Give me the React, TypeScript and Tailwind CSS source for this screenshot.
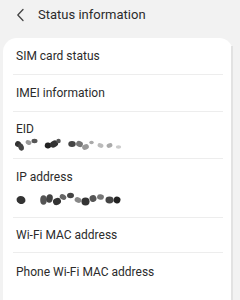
import React from "react";

const font = { fontFamily: "Roboto, 'Noto Sans', Arial, sans-serif" };

type Blot = [number, number, number, number, number, string];

function Blotches({ items, width, height, scale }: { items: Blot[]; width: number; height: number; scale: number }) {
  return (
    <svg width={width} height={height} viewBox={`0 0 ${width} ${height}`}>
      <g transform={`scale(${scale})`}>
        {items.map(([cx, cy, rx, ry, rot, fill], i) => (
          <ellipse key={i} cx={cx} cy={cy} rx={rx} ry={ry} fill={fill} transform={`rotate(${rot} ${cx} ${cy})`} />
        ))}
      </g>
    </svg>
  );
}

const eidBlots: Blot[] = [
  [2, 4, 2, 2, 20, "#333"],
  [4, 6, 1.8, 2.5, -20, "#444"],
  [9, 3, 2, 1.5, 30, "#999"],
  [13, 2, 2, 1.5, 0, "#555"],
  [22, 5, 2.2, 2, 10, "#222"],
  [26, 4, 2.8, 2.2, -30, "#333"],
  [29, 2, 1.5, 1.5, 0, "#555"],
  [38, 4, 2.5, 2, 0, "#444"],
  [43, 4, 2.3, 2, 20, "#777"],
  [47, 6, 2.3, 1.8, -20, "#999"],
  [51, 3, 1.5, 1.2, 0, "#aaa"],
  [57, 5, 2, 1.5, 20, "#bbb"],
  [63, 5, 2, 1.5, -20, "#aaa"],
  [69, 6, 1.8, 1.2, 0, "#ccc"],
];

const ipBlots: Blot[] = [
  [4, 6, 3, 2.7, 20, "#333"],
  [19, 6, 2.2, 3.2, 0, "#555"],
  [23, 5, 2.2, 2.8, 10, "#444"],
  [28, 7, 2.7, 2.3, -20, "#333"],
  [32, 4, 2.3, 1.8, 30, "#666"],
  [37, 3, 2.3, 1.8, 0, "#444"],
  [42, 6, 2.3, 1.8, 20, "#888"],
  [47, 7, 2.7, 2.7, 0, "#333"],
  [52, 5, 2.3, 2.3, -20, "#555"],
  [57, 4, 2.3, 1.8, 10, "#777"],
  [63, 6, 2.7, 2.3, 0, "#444"],
  [68, 6, 2.3, 2.3, 20, "#222"],
];

function Row({ label, h, sep = true }: { label: string; h: string; sep?: boolean }) {
  return (
    <div className={`mx-[10px] flex items-center pl-[3px] ${h} ${sep ? "border-b border-[#ededed]" : ""}`}>
      <span className="text-[12px] text-[#2b2b2b]">{label}</span>
    </div>
  );
}

export default function App() {
  return (
    <div className="relative h-[300px] w-[240px] overflow-hidden bg-[#f2f2f2]" style={font}>
      <div className="flex h-[29px] items-center pl-[16px]">
        <svg width="9" height="14" viewBox="0 0 9 14" className="text-[#444]">
          <path d="M7 1.5 L1.8 7 L7 12.5" fill="none" stroke="currentColor" strokeWidth="1.3" strokeLinecap="round" strokeLinejoin="round" />
        </svg>
        <span className="ml-[13px] text-[13px] text-[#2b2b2b]">Status information</span>
      </div>
      <div className="ml-[3px] mr-[7px] mt-[9px] h-[280px] rounded-[14px] bg-white">
        <Row label="SIM card status" h="h-[37px]" />
        <Row label="IMEI information" h="h-[37px]" />
        <div className="mx-[10px] flex h-[47px] flex-col border-b border-[#ededed] pl-[2px] pt-[9px]">
          <span className="pl-[1px] text-[12px] leading-[16px] text-[#2b2b2b]">EID</span>
          <div className="mt-[1px]">
            <Blotches items={eidBlots} width={110} height={13} scale={1.5} />
          </div>
        </div>
        <div className="mx-[10px] flex h-[59px] flex-col border-b border-[#ededed] pl-[2px] pt-[10px]">
          <span className="pl-[1px] text-[12px] leading-[16px] text-[#2b2b2b]">IP address</span>
          <div className="mt-[6px]">
            <Blotches items={ipBlots} width={110} height={16} scale={1.5} />
          </div>
        </div>
        <Row label="Wi-Fi MAC address" h="h-[35px]" />
        <Row label="Phone Wi-Fi MAC address" h="h-[37px]" sep={false} />
      </div>
      <div className="absolute right-[7px] top-[46px] h-[254px] w-[2px] bg-[#e2e2e2]" />
    </div>
  );
}
